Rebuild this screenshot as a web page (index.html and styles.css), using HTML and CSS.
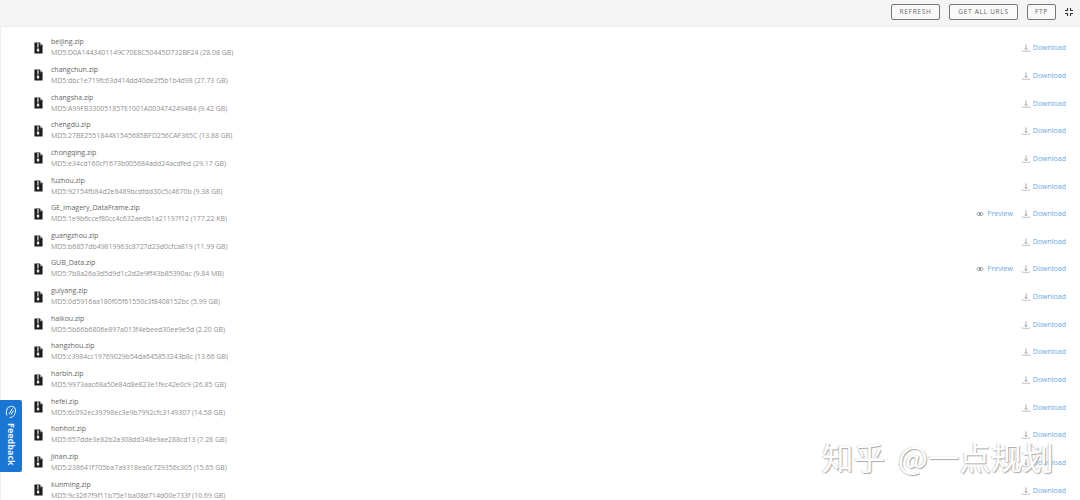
FILE: index.html
```html
<!DOCTYPE html>
<html lang="en">
<head>
<meta charset="utf-8">
<title>Files</title>
<link rel="stylesheet" href="styles.css">
</head>
<body>
<svg class="defs" width="0" height="0">
  <symbol id="zip" viewBox="0 0 10 13"><path d="M0.5 0.5H6.5L9.5 3.5V12.5H0.5Z" fill="#1c1c1c"/><path d="M6.5 0.5V3.5H9.5" fill="#999"/><rect x="3.6" y="1" width="1.6" height="5" fill="#ccc"/><rect x="3.2" y="7" width="2.6" height="3.4" rx="0.6" fill="#e8e8e8"/></symbol>
  <symbol id="dl" viewBox="0 0 9 9"><path d="M4.5 0.5V6.500M2.800 4.800 4.500 6.500 6.200 4.800" fill="none" stroke="#8a8a8a" stroke-width="0.8"/><path d="M0.500 7V8.300H8.500V7" fill="none" stroke="#b0b0b0" stroke-width="0.8"/></symbol>
  <symbol id="eye" viewBox="0 0 9 9"><path d="M0.500 4.500C2 2 7 2 8.500 4.500 7 7 2 7 0.500 4.500Z" fill="none" stroke="#8a8a8a" stroke-width="0.8"/><circle cx="4.500" cy="4.500" r="1.300" fill="#8a8a8a"/></symbol>
</svg>
<header class="bar">
  <button class="btn btn-refresh">REFRESH</button>
  <button class="btn btn-urls">GET ALL URLS</button>
  <button class="btn btn-ftp">FTP</button>
  <svg class="fs" width="8" height="8" viewBox="0 0 8 8"><path d="M2.500 0V2.500H0M5.500 0V2.500H8M2.500 8V5.500H0M5.500 8V5.500H8" fill="none" stroke="#333" stroke-width="1.100"/></svg>
</header>
<main class="list">
  <div class="row"><svg class="zip"><use href="#zip"/></svg><div class="info"><div class="name">beijing.zip</div><div class="md5">MD5:D0A1443401149C70E8C50445D732BF24 (28.08 GB)</div></div><div class="acts"><a class="act"><svg class="ico"><use href="#dl"/></svg>Download</a></div></div>
  <div class="row"><svg class="zip"><use href="#zip"/></svg><div class="info"><div class="name">changchun.zip</div><div class="md5">MD5:dbc1e719fc63d414dd40de2f5b1b4d98 (27.73 GB)</div></div><div class="acts"><a class="act"><svg class="ico"><use href="#dl"/></svg>Download</a></div></div>
  <div class="row"><svg class="zip"><use href="#zip"/></svg><div class="info"><div class="name">changsha.zip</div><div class="md5">MD5:A99FB330051857E1001A0034742494B4 (9.42 GB)</div></div><div class="acts"><a class="act"><svg class="ico"><use href="#dl"/></svg>Download</a></div></div>
  <div class="row"><svg class="zip"><use href="#zip"/></svg><div class="info"><div class="name">chengdu.zip</div><div class="md5">MD5:27BE255184481545685BFD256CAF365C (13.88 GB)</div></div><div class="acts"><a class="act"><svg class="ico"><use href="#dl"/></svg>Download</a></div></div>
  <div class="row"><svg class="zip"><use href="#zip"/></svg><div class="info"><div class="name">chongqing.zip</div><div class="md5">MD5:e34cd160cf1673b005684add24acdfed (29.17 GB)</div></div><div class="acts"><a class="act"><svg class="ico"><use href="#dl"/></svg>Download</a></div></div>
  <div class="row"><svg class="zip"><use href="#zip"/></svg><div class="info"><div class="name">fuzhou.zip</div><div class="md5">MD5:92154fb84d2e8489bcdfdd30c5c4670b (9.38 GB)</div></div><div class="acts"><a class="act"><svg class="ico"><use href="#dl"/></svg>Download</a></div></div>
  <div class="row"><svg class="zip"><use href="#zip"/></svg><div class="info"><div class="name">GE_Imagery_DataFrame.zip</div><div class="md5">MD5:1e9b6ccef80cc4c632aedb1a21197f12 (177.22 KB)</div></div><div class="acts"><a class="act"><svg class="ico"><use href="#eye"/></svg>Preview</a><a class="act"><svg class="ico"><use href="#dl"/></svg>Download</a></div></div>
  <div class="row"><svg class="zip"><use href="#zip"/></svg><div class="info"><div class="name">guangzhou.zip</div><div class="md5">MD5:b6857db49819963c8727d23d0cfca819 (11.99 GB)</div></div><div class="acts"><a class="act"><svg class="ico"><use href="#dl"/></svg>Download</a></div></div>
  <div class="row"><svg class="zip"><use href="#zip"/></svg><div class="info"><div class="name">GUB_Data.zip</div><div class="md5">MD5:7b8a26a3d5d9d1c2d2e9ff43b85390ac (9.84 MB)</div></div><div class="acts"><a class="act"><svg class="ico"><use href="#eye"/></svg>Preview</a><a class="act"><svg class="ico"><use href="#dl"/></svg>Download</a></div></div>
  <div class="row"><svg class="zip"><use href="#zip"/></svg><div class="info"><div class="name">guiyang.zip</div><div class="md5">MD5:0d5916aa180f05f61550c3f8408152bc (5.99 GB)</div></div><div class="acts"><a class="act"><svg class="ico"><use href="#dl"/></svg>Download</a></div></div>
  <div class="row"><svg class="zip"><use href="#zip"/></svg><div class="info"><div class="name">haikou.zip</div><div class="md5">MD5:5b66b6806e897a013f4ebeed30ee9e5d (2.20 GB)</div></div><div class="acts"><a class="act"><svg class="ico"><use href="#dl"/></svg>Download</a></div></div>
  <div class="row"><svg class="zip"><use href="#zip"/></svg><div class="info"><div class="name">hangzhou.zip</div><div class="md5">MD5:c3984cc19769029b54da645853243b8c (13.66 GB)</div></div><div class="acts"><a class="act"><svg class="ico"><use href="#dl"/></svg>Download</a></div></div>
  <div class="row"><svg class="zip"><use href="#zip"/></svg><div class="info"><div class="name">harbin.zip</div><div class="md5">MD5:9973aac68a50e84d8e823e1fec42e0c9 (26.85 GB)</div></div><div class="acts"><a class="act"><svg class="ico"><use href="#dl"/></svg>Download</a></div></div>
  <div class="row"><svg class="zip"><use href="#zip"/></svg><div class="info"><div class="name">hefei.zip</div><div class="md5">MD5:6c092ec39798ec3e9b7992cfc3149307 (14.58 GB)</div></div><div class="acts"><a class="act"><svg class="ico"><use href="#dl"/></svg>Download</a></div></div>
  <div class="row"><svg class="zip"><use href="#zip"/></svg><div class="info"><div class="name">hohhot.zip</div><div class="md5">MD5:657dde3e82b2a308dd348e9ae288cd13 (7.28 GB)</div></div><div class="acts"><a class="act"><svg class="ico"><use href="#dl"/></svg>Download</a></div></div>
  <div class="row"><svg class="zip"><use href="#zip"/></svg><div class="info"><div class="name">jinan.zip</div><div class="md5">MD5:238641f705ba7a9318ea0c729356c305 (15.65 GB)</div></div><div class="acts"><a class="act"><svg class="ico"><use href="#dl"/></svg>Download</a></div></div>
  <div class="row"><svg class="zip"><use href="#zip"/></svg><div class="info"><div class="name">kunming.zip</div><div class="md5">MD5:9c3267f9f11b75e1ba08d714d00e733f (10.69 GB)</div></div><div class="acts"><a class="act"><svg class="ico"><use href="#dl"/></svg>Download</a></div></div>
</main>
<aside class="feedback">
  <svg width="12" height="14" viewBox="0 0 12 14" class="fb-ico"><path d="M2 10.500C0.500 7 1.500 2.500 5 1.500 8.500 0.500 11 3 10.500 6.500 10 10 7.500 12.500 4.500 12.500" fill="none" stroke="#d6e6f8" stroke-width="1.100"/><path d="M4 9 7.500 3.500M6 9.500 8.500 5.500" stroke="#fff" stroke-width="1"/></svg>
  <span class="fb-text">Feedback</span>
</aside>
<div class="mark">知乎 @一点规划</div>
</body>
</html>
```
FILE: styles.css
```css
html, body {
  margin: 0;
  padding: 0;
  height: 500px;
  overflow: hidden;
  background: #fff;
  font-family: "Open Sans", sans-serif;
}
.defs { position: absolute; }
.bar {
  height: 27px;
  box-sizing: border-box;
  display: flex;
  align-items: center;
  justify-content: flex-end;
  background: #f5f5f5;
  border-bottom: 1px solid #ebebeb;
  padding: 0 7px 3px 0;
}
.btn {
  height: 16px;
  padding: 0;
  box-sizing: border-box;
  border: 1px solid #777;
  border-radius: 2px;
  background: #fafafa;
  color: #666;
  font-family: "Open Sans", sans-serif;
  font-size: 6.500px;
  letter-spacing: 0.700px;
  line-height: 14px;
}
.btn-refresh { width: 49px; margin-right: 9px; }
.btn-urls { width: 69px; margin-right: 9px; }
.btn-ftp { width: 29px; margin-right: 9px; }
.fs { display: block; }
.list {
  padding-top: 6.500px;
  border-left: 1px solid #eee;
}
.row {
  height: 27.650px;
  box-sizing: border-box;
  display: flex;
  align-items: center;
  padding: 0 14px 0 33px;
  position: relative;
}
.zip { width: 9px; height: 12px; flex: none; margin-top: 1px; }
.info { margin-left: 8px; flex: 1; }
.name { font-size: 7px; line-height: 11px; color: #666; }
.md5 { font-size: 6.950px; line-height: 11px; color: #919191; }
.acts { display: flex; gap: 9px; margin-top: 2px; }
.act {
  display: flex;
  align-items: center;
  gap: 3px;
  font-family: "Open Sans", sans-serif;
  font-size: 7px;
  line-height: 10px;
  color: #6aa9e0;
}
.ico { width: 8px; height: 8px; flex: none; }
.feedback {
  position: absolute;
  left: 0;
  top: 400px;
  width: 22px;
  height: 72px;
  box-sizing: border-box;
  background: #1976d2;
  border-radius: 0 2px 2px 0;
  display: flex;
  flex-direction: column;
  align-items: center;
  padding-top: 5px;
  gap: 4px;
  color: #fff;
}
.fb-text {
  writing-mode: vertical-rl;
  font-family: "Open Sans", sans-serif;
  font-size: 9px;
  font-weight: 700;
  line-height: 12px;
  color: #e8f1fb;
}
.mark {
  position: absolute;
  left: 822px;
  top: 437px;
  font-family: "Noto Sans CJK SC", sans-serif;
  font-size: 31.500px;
  line-height: 38px;
  word-spacing: 6px;
  white-space: nowrap;
  color: #fff;
  text-shadow: 1px 1px 1px #a8a8a8, -1px 0 1px #d4d4d4;
}
```
